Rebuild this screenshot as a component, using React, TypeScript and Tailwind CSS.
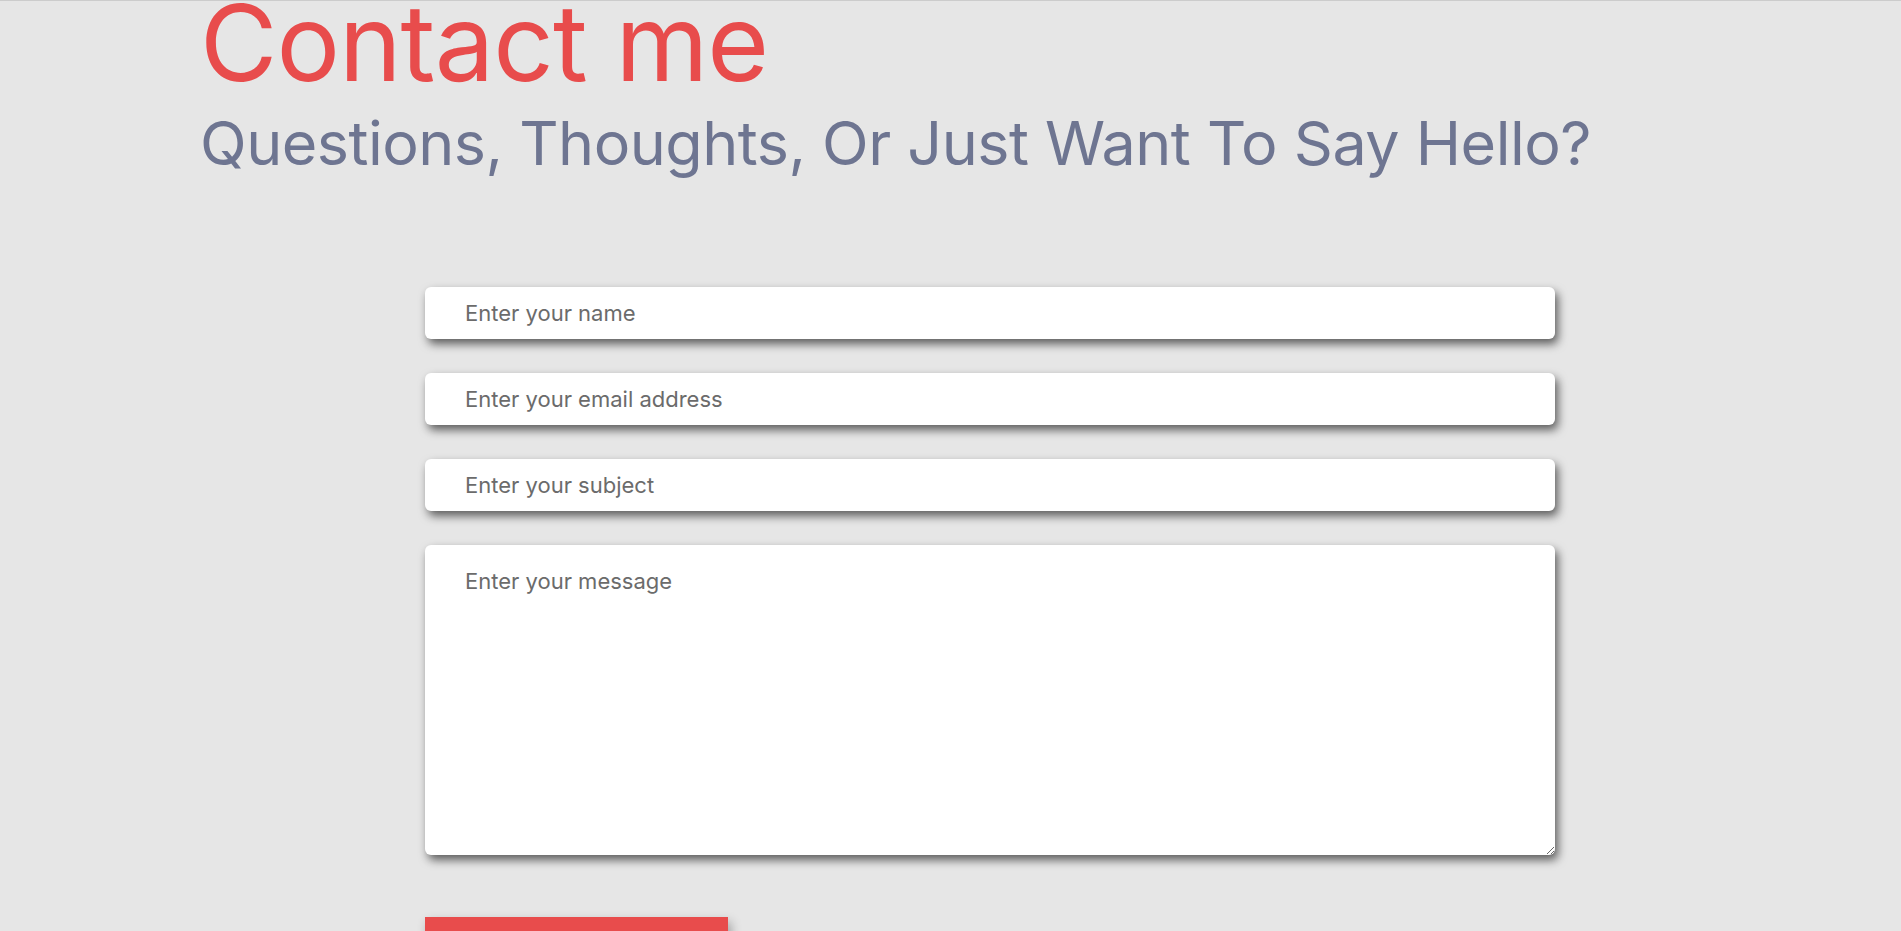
import React from "react";

export default function App() {
  const inputCls =
    "block w-[1130px] h-[52px] bg-white rounded-[6px] pl-[40px] pr-4 text-[22px] text-[#333] placeholder:text-[#6b6b6b] outline-none shadow-[3px_5px_10px_rgba(0,0,0,0.6)]";
  return (
    <div
      className="min-h-[931px] bg-[#e6e6e6] border-t border-[#cccccc] overflow-hidden"
      style={{ fontFamily: "Inter, 'Noto Sans', sans-serif" }}
    >
      <div className="pl-[200px]">
        <h1 className="text-[106px] leading-[84px] text-[#e84c4c] font-normal tracking-[-1px]">
          Contact me
        </h1>
        <h2 className="text-[61px] leading-[70px] text-[#6e7591] font-normal mt-[23px] tracking-[-0.5px]">
          Questions, Thoughts, Or Just Want To Say Hello?
        </h2>
      </div>
      <form className="pl-[425px] pt-[109px] flex flex-col gap-[34px]">
        <input className={inputCls} placeholder="Enter your name" />
        <input className={inputCls} placeholder="Enter your email address" />
        <input className={inputCls} placeholder="Enter your subject" />
        <textarea
          className="block w-[1130px] h-[310px] bg-white rounded-[6px] pl-[40px] pr-4 pt-[20px] text-[22px] text-[#333] placeholder:text-[#6b6b6b] outline-none shadow-[3px_5px_10px_rgba(0,0,0,0.6)]"
          placeholder="Enter your message"
        />
        <button
          type="button"
          className="w-[303px] h-[56px] bg-[#e84c4c] mt-[28px] text-white text-[22px] shadow-[3px_5px_10px_rgba(0,0,0,0.3)]"
        >
          Send
        </button>
      </form>
    </div>
  );
}
